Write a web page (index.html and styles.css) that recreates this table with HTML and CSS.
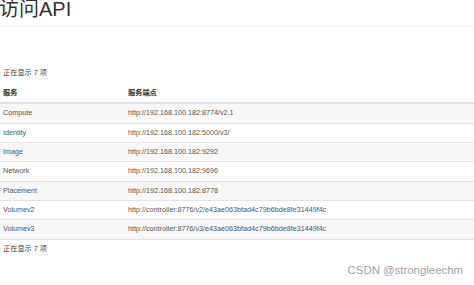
FILE: index.html
```html
<!DOCTYPE html>
<html lang="zh">
<head>
<meta charset="utf-8">
<title>访问API</title>
<link rel="stylesheet" href="styles.css">
</head>
<body>
<div class="page-header"><h1>访问API</h1></div>
<div class="table-wrap">
  <div class="count">正在显示 7 项</div>
  <table class="api-table">
    <thead>
      <tr><th class="col-name">服务</th><th>服务端点</th></tr>
    </thead>
    <tbody>
      <tr><td>Compute</td><td>http://192.168.100.182:8774/v2.1</td></tr>
      <tr><td>Identity</td><td>http://192.168.100.182:5000/v3/</td></tr>
      <tr><td>Image</td><td>http://192.168.100.182:9292</td></tr>
      <tr><td>Network</td><td>http://192.168.100.182:9696</td></tr>
      <tr><td>Placement</td><td>http://192.168.100.182:8778</td></tr>
      <tr><td>Volumev2</td><td>http://controller:8776/v2/e43ae063bfad4c79b6bde8fe31449f4c</td></tr>
      <tr><td>Volumev3</td><td>http://controller:8776/v3/e43ae063bfad4c79b6bde8fe31449f4c</td></tr>
    </tbody>
  </table>
  <div class="count count-bottom">正在显示 7 项</div>
</div>
<div class="watermark">CSDN @strongleechm</div>
</body>
</html>
```
FILE: styles.css
```css
html, body {
  margin: 0;
  padding: 0;
  background: #fff;
}
body {
  font-family: "Liberation Sans", "Noto Sans CJK SC", sans-serif;
  color: #333;
  position: relative;
  height: 285px;
  overflow: hidden;
}
.page-header {
  border-bottom: 2px solid #f6f6f6;
  padding: 0 0 5px 0;
}
.page-header h1 {
  margin: -2px 0 0 -1px;
  font-size: 20px;
  line-height: 22px;
  font-weight: normal;
  color: #333;
}
.table-wrap {
  margin-top: 41px;
}
.count {
  font-size: 7.2px;
  line-height: 10px;
  padding-left: 3px;
  color: #444;
}
.count-bottom {
  margin-top: 4px;
}
.api-table {
  width: 100%;
  border-collapse: collapse;
  margin-top: 6px;
  font-size: 7.2px;
}
.api-table th,
.api-table td {
  text-align: left;
  padding: 4px 3px;
  line-height: 10.33px;
  vertical-align: top;
}
.api-table th {
  font-weight: bold;
  color: #333;
  border-bottom: 2px solid #e2e2e2;
}
.api-table .col-name {
  width: 119px;
}
.api-table td {
  border-top: 1px solid #e4e4e4;
  color: #555;
}
.api-table tbody tr:last-child td {
  border-bottom: 1px solid #e4e4e4;
}
.api-table tbody tr:nth-child(odd) {
  background: #f7f7f7;
}
.watermark {
  position: absolute;
  right: 11px;
  bottom: 8px;
  font-size: 11.4px;
  line-height: 14px;
  color: #a3a3a3;
}
```
